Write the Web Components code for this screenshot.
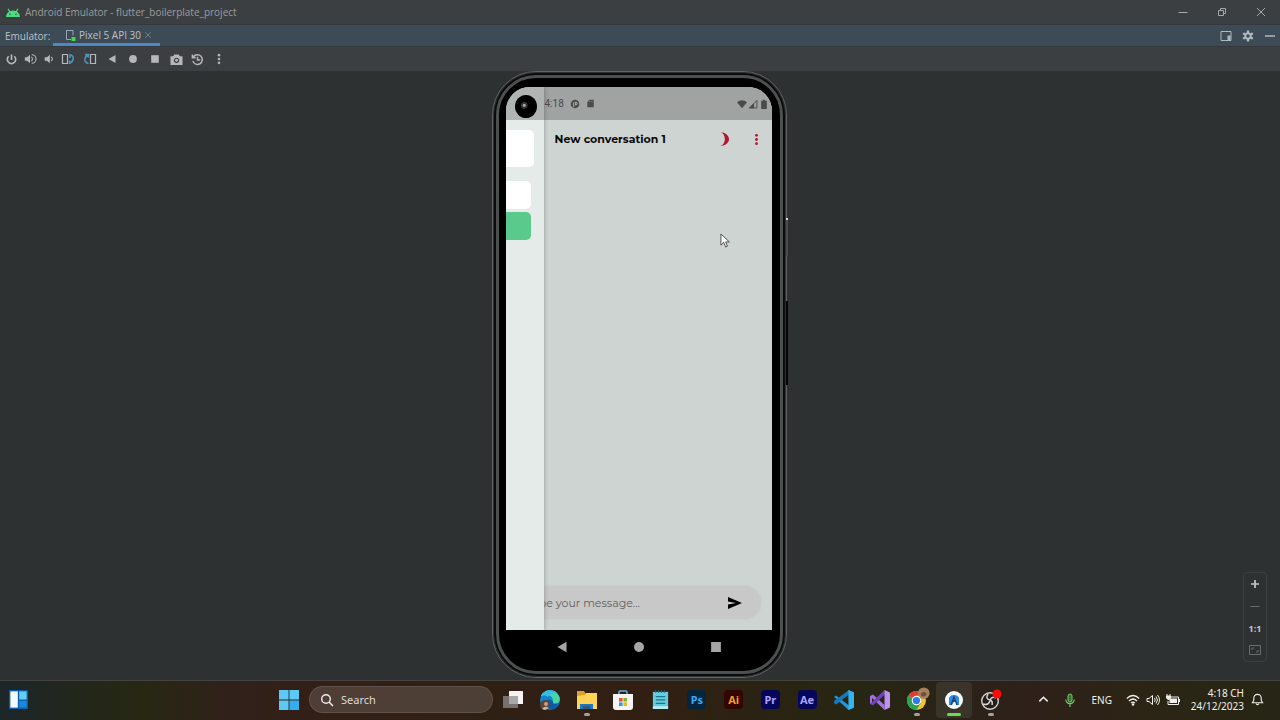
<!DOCTYPE html>
<html lang="en">
<head>
<meta charset="utf-8">
<title>Android Emulator - flutter_boilerplate_project</title>
<style>
  html, body { margin: 0; height: 100%; background: #2c3030; }
  body { font-family: "Open Sans", "Noto Sans", sans-serif; }
</style>
</head>
<body>
<emulator-desktop></emulator-desktop>

<script>
const ICONS = {
  android: '<path fill="#4ade80" d="M0 12a7 7 0 0 1 3-5.500L1.500 4l.8-.4L4.200 6a8 8 0 0 1 5.600 0l1.900-2.400.8.4L11 6.500A7 7 0 0 1 14 12z"/><circle cx="4" cy="9.200" r=".7" fill="#3c3f41"/><circle cx="10" cy="9.200" r=".7" fill="#3c3f41"/>|14',
  minimize: '<path d="M2.500 7.500h9" stroke="currentColor"/>|14',
  restore: '<path d="M3.500 5.500h5v5h-5zM5.500 5.500v-2h5v5h-2" fill="none" stroke="currentColor"/>|14',
  close: '<path d="M3 3l8 8M11 3l-8 8" stroke="currentColor" fill="none"/>|14',
  layout: '<path d="M2 2.500h10v9H2z" fill="none" stroke="currentColor"/><path d="M8.500 6.500h3v5h-3z" fill="currentColor"/>|14',
  gear: '<path fill="none" stroke="currentColor" stroke-width="2" d="M7 4.300a2.700 2.700 0 1 0 .01 0z"/><path stroke="currentColor" stroke-width="2.400" d="M7 1.500v2.500M7 10v2.500M2.200 4.300l2 1.200M9.800 8.500l2 1.200M2.200 9.700l2-1.200M9.800 5.500l2-1.200"/>|14',
  dash: '<path d="M2 7h10" stroke="currentColor" stroke-width="1.500"/>|14',
  phonetab: '<path d="M3 2.500h7v5M3.500 2v9.500H8" fill="none" stroke="#9aa7b0"/><path d="M8.500 9h4v4h-4z" fill="#3ddc4a"/>|14',
  power: '<path d="M4 3.500a4.500 4.500 0 1 0 6 0M7 1.500v6" fill="none" stroke="currentColor" stroke-width="1.800"/>|14',
  volup: '<path d="M1 5h2.500L7 2v10L3.500 9H1z" fill="currentColor"/><path d="M8.500 4.500a3 3 0 0 1 0 5M9 2a5 5 0 0 1 0 10" fill="none" stroke="currentColor" stroke-width="1.300"/>|14',
  voldown: '<path d="M2 5h2.500L8 2v10L4.500 9H2z" fill="currentColor"/><path d="M9.500 4.500a3 3 0 0 1 0 5" fill="none" stroke="currentColor" stroke-width="1.300"/>|14',
  rotl: '<path d="M1.500 2.500h5v9h-5z" fill="none" stroke="currentColor" stroke-width="1.200"/><path d="M8.500 2.500q4.500 1 3.500 5-.7 3-4 4M9 3V6M8.500 8.500V12" fill="none" stroke="#4595bf" stroke-width="1.600"/>|14',
  rotr: '<path d="M7.500 2.500h5v9h-5z" fill="none" stroke="currentColor" stroke-width="1.200"/><path d="M5.500 11.500q-4.500-1-3.500-5Q2.500 4 5 3M2 2.500h3.500V5.500" fill="none" stroke="#4595bf" stroke-width="1.600"/>|14',
  back: '<path d="M10.500 3v8L3.500 7z" fill="currentColor"/>|14',
  dot: '<circle cx="7" cy="7" r="3.900" fill="currentColor"/>|14',
  square: '<path d="M3.200 3.200h7.600v7.600H3.200z" fill="currentColor"/>|14',
  camera: '<path fill-rule="evenodd" d="M0.500 3.500h3l1-2h5l1 2h3v9.500h-13zM7 5a2.900 2.900 0 1 0 .01 0z" fill="currentColor"/><circle cx="7" cy="7.900" r="1.600" fill="currentColor"/>|14',
  history: '<path d="M2.500 4.500A5.200 5.200 0 1 1 2 8.500M1.500 1.500V5H5M7 4v3.500h3" fill="none" stroke="currentColor" stroke-width="1.600"/>|14',
  more: '<circle cx="7" cy="2.500" r="1.500" fill="currentColor"/><circle cx="7" cy="7" r="1.500" fill="currentColor"/><circle cx="7" cy="11.500" r="1.500" fill="currentColor"/>|14',
  plus: '<path d="M7 3v8M3 7h8" stroke="currentColor" stroke-width="1.700"/>|14',
  fit: '<path d="M1.500 2.500h11v9h-11zM4 7V5h2M10 7v2H8" fill="none" stroke="currentColor"/>|14',
  parking: '<circle cx="7" cy="7" r="6" fill="currentColor"/><path d="M5 11.500V4.500M7.500 9V4.500h1a1.800 1.800 0 0 1 0 3.500H7.500" fill="none" stroke="#a0a3a2" stroke-width="1.500"/>|14',
  sdcard: '<path d="M5.500 1H12v12H2V4.500z" fill="currentColor"/><path d="M5.500 3v2M7.500 3v2M9.500 3v2" stroke="#9a9d9c" stroke-width=".8"/>|14',
  pwifi: '<path d="M0 4.500q7-5.500 14 0L7 13z" fill="currentColor"/>|14',
  psignal: '<path d="M12.500 2v10.500H2z" fill="none" stroke="currentColor" stroke-width="1.300"/><path d="M8.500 6v7H1z" fill="currentColor"/>|14',
  pbattery: '<path d="M3 2.500h2.500V1h3v1.500H11V14H3z" fill="currentColor"/>|14',
  moon: '<path d="M3 0c5 1 8 4 8 7.200S7.500 13.800 2.500 14c3-1.300 4.300-3.700 4.300-6.800C6.800 4 5.500 1.300 3 0z" fill="#b3152c"/>|14',
  send: '<path d="M0 1l14 6-14 6V8.500L8 7 0 5.500z" fill="#000"/>|14',
  grid: '<path fill="#0b5ca8" d="M0 0h14v14H0z"/><path fill="#f4fbff" d="M1 1h5.500v12H1z"/><path fill="#62cdf6" d="M7.500 1H13v6H7.500z"/><path fill="#1989dc" d="M7.500 8H13v5H7.500z"/>|14',
  windows: '<path fill="#5cc9f6" d="M0 0h6.700v6.700H0zM7.300 0H14v6.700H7.300zM0 7.300h6.700V14H0z"/><path fill="#35acf0" d="M7.300 7.300H14V14H7.300z"/>|14',
  search: '<circle cx="6" cy="6" r="4.300" fill="none" stroke="#f0ece8" stroke-width="1.400"/><path d="M9 9l4 4" stroke="#f0ece8" stroke-width="1.600"/>|14',
  taskview: '<path fill="#f5f4f3" d="M6 1h14v13H6z"/><path fill="#7d7a78" d="M0 6h15v12H0z" opacity=".9"/><path fill="#aaa8a6" d="M6 6h9v8H6z"/>|20',
  edge: '<circle cx="10" cy="10" r="10" fill="#1683d0"/><path d="M1 6C3-1 16-2 19.500 7c1 4-1 7-5 7-3 0-3-2-2-3 2-4-5-8-11-5z" fill="#45d6a4"/><path d="M1 6c4-7 13-7 16-3-5-1-8 1-9 4-3-2-5-2-7-1z" fill="#35bde8"/><path d="M13 11q-1 4 6 2-3 6-9 7-5-5-2-11z" fill="#0d59a5"/><circle cx="5" cy="15" r="5" fill="#56463c"/><circle cx="6" cy="14" r="2" fill="#d19b7b"/><path d="M2 19q3-4 7-1l-4 2z" fill="#cbb8ab"/>|20',
  folder: '<path fill="#dba22a" d="M0 1h7l2 3h11v13H0z"/><path fill="#ffd355" d="M0 6l8-1 1-2h11v16H0z"/><path fill="#1d76ba" d="M3 14h13v5H3z"/><path fill="#34567b" d="M6 16h7v3H6z"/>|20',
  store: '<path d="M6 6V2q0-1 1-1h6q1 0 1 1v4" fill="none" stroke="#58b7e9" stroke-width="1.500"/><path fill="#f4f4f4" d="M0 4h20v13q0 3-3 3H3q-3 0-3-3z"/><path fill="#ef5027" d="M6 8h3.600v3.600H6z"/><path fill="#7db82c" d="M10.400 8H14v3.600h-3.600z"/><path fill="#2c9de4" d="M6 12.400h3.600V16H6z"/><path fill="#f5b51a" d="M10.400 12.400H14V16h-3.600z"/>|20',
  notepad: '<path fill="#65cddd" d="M2 2h16v18H2z"/><path fill="#b5eef2" d="M2 17h16v3H2z"/><path d="M5 7h10M5 10.500h10M5 14h10" stroke="#18788c" stroke-width="1.300"/><path d="M5 0v3M8 0v3M11 0v3M14 0v3" stroke="#176b7b"/>|20',
  vscode: '<path fill="#2497dc" d="M14.500 0L20 2.500v15L14.500 20 2 8.500 0 7l2-1.500 13 10z"/><path fill="#147abc" d="M0 13l2 1.500L15 4.500V0L0 11z"/><path fill="#35b5f0" d="M14.500 0L20 2.500v15L14.500 20z"/>|20',
  vs: '<path fill="#a46fdf" d="M0 6l3-1.500L14.500 15v5L2 8v5l-2 1z"/><path fill="#6f42b5" d="M0 14l3 1.500L14.500 5V0L2 12z"/><path fill="#bd91f0" d="M14.500 0L20 2.500v15L14.500 20z"/>|20',
  chrome: '<circle cx="9" cy="11" r="9" fill="#f7c52b"/><path d="M9 11L1.200 6.500A9 9 0 0 1 16.800 6.500H9z" fill="#df3e32"/><path d="M9 11L1.200 6.500A9 9 0 0 0 9 20l4-6.500z" fill="#2ba24c"/><circle cx="9" cy="11" r="4.500" fill="#fff"/><circle cx="9" cy="11" r="3.500" fill="#2b7de9"/><circle cx="16" cy="4" r="5.500" fill="#aa8058"/><path d="M13 5q3-5 6 0l-2 2h-3z" fill="#68513e"/>|20',
  studio: '<circle cx="10" cy="10" r="9" fill="#f7fbff"/><path d="M5 15V8q1-3 5-3t5 3v7h-3V9L8 15z" fill="#2e8be6"/><path d="M7 15l3-8 3 8M9 11h3" fill="none" stroke="#15406f" stroke-width="1.300"/>|20',
  obs: '<circle cx="9" cy="11" r="8.300" fill="#211e1c" stroke="#d6d3d0" stroke-width="1.400"/><path d="M7 4q-3 5 2 6 3 1 2 5M2 14q5 2 7-3M15 8q-4-2-6 2" fill="none" stroke="#d6d3d0" stroke-width="1.500"/><circle cx="16" cy="4" r="4.500" fill="#ff0808"/>|20',
  chevron: '<path d="M2.500 9L7 4.500 11.500 9" fill="none" stroke="currentColor" stroke-width="1.600"/>|14',
  mic: '<rect x="5" y="1" width="4" height="8" rx="2" fill="#376f32" stroke="#75c96c"/><path d="M2.800 6.500a4.200 4.200 0 0 0 8.400 0M7 10.500V14" fill="none" stroke="#75c96c" stroke-width="1.200"/>|14',
  wifi: '<path d="M.8 5.500q6.200-6 12.400 0M3 8q4-4 8 0M5 10.200q2-2 4 0" fill="none" stroke="currentColor" stroke-width="1.200"/><circle cx="7" cy="11.500" r="1.200" fill="currentColor"/>|14',
  sound: '<path d="M1 5.500h2L6.500 2.500v9L3 8.500H1zM8.500 5q1.500 2 0 4M10 3.500q3 3.500 0 7M11.500 2q4 5 0 10" fill="none" stroke="currentColor"/>|14',
  battery: '<path d="M3 4h9.500v7.500H2V8" fill="none" stroke="currentColor"/><path d="M3.500 5.500H11V10H3.500zM13 6h1v3h-1z" fill="currentColor"/><path d="M1 1v2M4 1v2M.5 3h4v2l-2 2-2-2z" fill="currentColor" stroke="currentColor"/>|14',
  bell: '<path d="M1.500 10.500L3 8V5.500a4 4 0 0 1 8 0V8l1.500 2.500zM5.500 11.500a1.600 1.600 0 0 0 3 0" fill="none" stroke="currentColor" stroke-width="1.200"/>|14',
  cursor: '<path d="M1 0v12l3-3 2 5 2-1-2-4.500h4z" fill="#fff" stroke="#222" stroke-width=".8"/>|14'
};

const define = (name, html) => customElements.define(name, class extends HTMLElement {
  constructor() {
    super();
    const t = document.createElement('template');
    t.innerHTML = '<style>*{box-sizing:border-box}:host{box-sizing:border-box}button{font:inherit;color:inherit;background:none;border:0;padding:0;margin:0;display:grid;place-items:center}</style>' + html;
    this.attachShadow({ mode: 'open' }).append(t.content.cloneNode(true));
  }
});

customElements.define('ui-icon', class extends HTMLElement {
  connectedCallback() {
    if (this.shadowRoot) return;
    const [art, box] = ICONS[this.getAttribute('name')].split('|');
    const size = this.getAttribute('size') || box;
    this.attachShadow({ mode: 'open' }).innerHTML =
      `<style>:host{display:block;flex:none;width:${size}px;height:${size}px}svg{display:block;overflow:visible}</style>
       <svg width="${size}" height="${size}" viewBox="0 0 ${box} ${box}" aria-hidden="true">${art}</svg>`;
  }
});

define('title-bar', `
<style>
  :host { display: flex; align-items: center; height: 24px; padding: 0 12px 0 6px; background: #3c3f41; color: #9a9c9d; font-size: 10px; }
  .name { flex: 1; margin-left: 5px; white-space: nowrap; }
  nav { display: flex; gap: 25px; color: #a5a7a8; }
</style>
<ui-icon name="android"></ui-icon><span class="name">Android Emulator - flutter_boilerplate_project</span>
<nav><button aria-label="Minimize"><ui-icon name="minimize"></ui-icon></button><button aria-label="Restore"><ui-icon name="restore"></ui-icon></button><button aria-label="Close"><ui-icon name="close"></ui-icon></button></nav>`);

define('tab-bar', `
<style>
  :host { display: flex; height: 23px; padding: 0 3px 0 5px; align-items: stretch; background: #3d4b57; border-top: 1px solid #35383a; border-bottom: 1px solid #35383a; color: #bcc1c4; font-size: 10px; }
  .label { width: 48px; align-self: center; white-space: nowrap; }
  .tab { display: flex; align-items: center; gap: 2px; width: 107px; padding: 2px 8px 0 10px; border-bottom: 3px solid #4a88c7; }
  .tab button { color: #84919a; }
  .tab span { flex: 1; white-space: nowrap; }
  nav { display: flex; gap: 8px; margin-left: auto; align-items: center; color: #afb9c0; }
</style>
<span class="label">Emulator:</span>
<div class="tab"><ui-icon name="phonetab"></ui-icon><span>Pixel 5 API 30</span><button aria-label="Close tab"><ui-icon name="close" size="10"></ui-icon></button></div>
<nav><button aria-label="Layout"><ui-icon name="layout"></ui-icon></button><button aria-label="Settings"><ui-icon name="gear"></ui-icon></button><button aria-label="Hide"><ui-icon name="dash"></ui-icon></button></nav>`);

define('tool-bar', `
<style>
  :host { display: flex; align-items: center; height: 24px; padding: 0 4px; gap: 8px; background: #3c3f41; color: #b4b6b8; }
  div { display: flex; gap: 5px; }
  .nav { justify-content: space-between; gap: 0; width: 143px; }
  button { width: 14px; }
</style>
<div>
<button aria-label="Power"><ui-icon name="power" size="13"></ui-icon></button>
<button aria-label="Volume up"><ui-icon name="volup" size="12"></ui-icon></button>
<button aria-label="Volume down"><ui-icon name="voldown" size="12"></ui-icon></button>
<button aria-label="Rotate left"><ui-icon name="rotl"></ui-icon></button>
</div>
<div class="nav">
<button aria-label="Rotate right"><ui-icon name="rotr"></ui-icon></button>
<button aria-label="Back"><ui-icon name="back"></ui-icon></button>
<button aria-label="Home"><ui-icon name="dot"></ui-icon></button>
<button aria-label="Overview"><ui-icon name="square"></ui-icon></button>
<button aria-label="Screenshot"><ui-icon name="camera" size="13"></ui-icon></button>
<button aria-label="Snapshots"><ui-icon name="history" size="13"></ui-icon></button>
<button aria-label="More"><ui-icon name="more" size="12"></ui-icon></button>
</div>`);

define('status-bar', `
<style>
  :host { display: flex; align-items: center; height: 33px; padding: 0 3px 0 39px; gap: 4px; background: #a0a3a2; color: #484b4a; font: 10px Roboto, sans-serif; }
  .time { margin-right: 2px; }
  ui-icon + ui-icon { margin-left: 2px; }
  .right { display: flex; margin-left: auto; align-items: center; }
  .right ui-icon { margin: 0; }
  .right ui-icon + ui-icon { margin-left: 1px; }
</style>
<span class="time">4:18</span><ui-icon name="parking" size="10"></ui-icon><ui-icon name="sdcard" size="9"></ui-icon>
<div class="right"><ui-icon name="pwifi" size="10"></ui-icon><ui-icon name="psignal" size="10"></ui-icon><ui-icon name="pbattery" size="10"></ui-icon></div>`);

define('side-drawer', `
<style>
  :host { display: flex; flex-direction: column; align-items: flex-start; padding: 43px 10px 0 0; background: linear-gradient(#b0b5b3 0 33px, #e4ebe8 33px); box-shadow: 1px 0 4px #0003; }
  div { background: #fff; border-radius: 0 5px 5px 0; height: 28px; width: 25px; }
  .head { width: 28px; height: 37px; margin-bottom: 14px; }
  .new { background: #5ac98c; margin-top: 3px; }
</style>
<div class="head"></div><div></div><div class="new"></div>`);

define('chat-screen', `
<style>
  :host { position: relative; display: flex; flex-direction: column; overflow: hidden; background: #ced4d2; border-radius: 24px 24px 0 0; font-family: Montserrat, Inter, sans-serif; color: #0a0a0a; }
  header { display: flex; align-items: center; height: 38px; padding: 0 9px 0 49px; }
  h1 { flex: 1; margin: 0; font-size: 11px; font-weight: 700; white-space: nowrap; }
  .more { color: #b3152c; margin-left: 18px; }
  main { flex: 1; }
  form { display: flex; align-items: center; height: 33px; margin: 0 11px 11px 10px; padding: 0 19px 0 11px; border-radius: 17px; background: #c9c8c8; box-shadow: 0 0 3px #c9c8c8; }
  input { flex: 1; min-width: 0; border: 0; outline: 0; padding: 0; background: none; font: 11px Montserrat, Inter, sans-serif; color: #222; }
  input::placeholder { color: #5f6060; opacity: 1; }
  side-drawer { position: absolute; inset: 0 auto 0 0; width: 38px; }
  .lens { position: absolute; left: 9px; top: 8px; width: 22px; height: 23px; border-radius: 50%; background: radial-gradient(circle at 42% 45%, #aaa 0 1px, #333 2px 3px, #000 4px); }
  .pointer { position: absolute; left: 214px; top: 147px; }
</style>
<status-bar></status-bar>
<header><h1>New conversation 1</h1><button aria-label="Dark mode"><ui-icon name="moon"></ui-icon></button><button class="more" aria-label="Menu"><ui-icon name="more" size="13"></ui-icon></button></header>
<main></main>
<form><input type="text" aria-label="Message" placeholder="Type your message..."><button type="button" aria-label="Send"><ui-icon name="send"></ui-icon></button></form>
<side-drawer></side-drawer><div class="lens"></div><ui-icon class="pointer" name="cursor" size="13"></ui-icon>`);

define('phone-device', `
<style>
  :host { position: relative; display: flex; width: 295px; padding: 3px; border: 1px solid #636565; border-radius: 44px; background: #090a0a; box-shadow: inset 0 0 1px 1px #343636; }
  .ring { flex: 1; display: flex; flex-direction: column; border: 3px solid #4d5050; border-radius: 40px; background: #000; padding: 9px 8px 0 7px; overflow: hidden; }
  chat-screen { flex: 1; }
  nav { display: grid; grid-template-columns: repeat(3, 77px); justify-content: center; height: 33px; margin-bottom: 8px; color: #a5a5a5; }
  .key { position: absolute; left: 100%; width: 2px; }
  .power { top: 146px; height: 38px; background: #4b4d4d; border-top: 2px solid #ddd; }
  .volume { top: 229px; height: 84px; background: #050505; }
</style>
<div class="ring"><chat-screen></chat-screen>
<nav><button aria-label="Back"><ui-icon name="back" size="18"></ui-icon></button><button aria-label="Home"><ui-icon name="dot" size="18"></ui-icon></button><button aria-label="Overview"><ui-icon name="square" size="18"></ui-icon></button></nav></div>
<div class="key power"></div><div class="key volume"></div>`);

define('zoom-panel', `
<style>
  :host { display: flex; flex-direction: column; align-items: center; width: 24px; padding: 3px 0; gap: 6px; border: 1px solid #3b3f40; border-radius: 4px; color: #c4c6c7; font: 700 9px "Open Sans", sans-serif; }
  button { width: 22px; height: 16px; white-space: nowrap; }
  .dim { color: #686c6d; }
</style>
<button aria-label="Zoom in"><ui-icon name="plus"></ui-icon></button><button class="dim" aria-label="Zoom out"><ui-icon name="minimize"></ui-icon></button><button>1:1</button><button class="dim" aria-label="Fit"><ui-icon name="fit"></ui-icon></button>`);

define('task-app', `
<style>
  :host { position: relative; display: grid; place-items: center; height: 36px; border-radius: 4px; }
  :host([active]) { background: #ffffff14; }
  :host([running])::after, :host([active])::after { content: ""; position: absolute; bottom: 2px; left: 50%; width: 6px; margin-left: -3px; height: 3px; border-radius: 2px; background: #a5a09c; }
  :host([active])::after { width: 14px; margin-left: -7px; background: #67df4d; }
</style>
<button><slot></slot></button>`);

define('task-bar', `
<style>
  :host { display: grid; grid-template-columns: 1fr auto 1fr; align-items: center; height: 40px; padding-bottom: 2px; border-top: 1px solid #45433f; color: #f1efec; background: linear-gradient(90deg, #1c2629 0, #232719 7%, #272713 11%, #30211a 18%, #331f17 25%, #2f2014 38%, #321f14 50%, #2b2212 58%, #272612 66%, #292317 74%, #2e201a 80%, #2b2514 90%, #272515); }
  .widgets { justify-self: start; margin-left: 9px; }
  .center { display: flex; align-items: center; gap: 2px; }
  .start { width: 36px; }
  .search { display: flex; align-items: center; gap: 7px; width: 184px; height: 27px; padding: 0 10px; border: 1px solid #ffffff1a; border-radius: 14px; background: #ffffff24; }
  input { width: 120px; border: 0; padding: 0; outline: 0; background: none; color: #fff; font: 11px "Noto Sans", sans-serif; }
  input::placeholder { color: #dedad7; opacity: 1; }
  .apps { display: grid; grid-template-columns: repeat(14, 1fr); width: 514px; }
  .adobe { width: 19px; height: 19px; border-radius: 4px; font: 700 11px/19px "Noto Sans", sans-serif; text-align: center; }
  .ps { background: #06263f; color: #3ea8f5; } .ai { background: #330604; color: #f79a28; }
  .pr { background: #06065b; color: #b4a1fb; } .ae { background: #06065b; color: #aaa3fa; }
  .tray { display: flex; justify-self: end; align-items: center; margin-right: 16px; font: 10px "Noto Sans", sans-serif; }
  .mic { margin: 0 15px 0 13px; } .lang { margin-right: 14px; }
  .net { display: flex; gap: 6px; }
  .clock { display: grid; width: 56px; margin: 0 6px 0 9px; padding-right: 1px; justify-items: end; line-height: 13px; white-space: nowrap; }
</style>
<button class="widgets" aria-label="Widgets"><ui-icon name="grid" size="19"></ui-icon></button>
<div class="center">
  <button class="start" aria-label="Start"><ui-icon name="windows" size="20"></ui-icon></button>
  <label class="search"><ui-icon name="search"></ui-icon><input type="text" aria-label="Search" placeholder="Search"></label>
  <div class="apps">
    <task-app><ui-icon name="taskview"></ui-icon></task-app>
    <task-app><ui-icon name="edge"></ui-icon></task-app>
    <task-app running><ui-icon name="folder"></ui-icon></task-app>
    <task-app><ui-icon name="store"></ui-icon></task-app>
    <task-app><ui-icon name="notepad" size="19"></ui-icon></task-app>
    <task-app><div class="adobe ps">Ps</div></task-app>
    <task-app><div class="adobe ai">Ai</div></task-app>
    <task-app><div class="adobe pr">Pr</div></task-app>
    <task-app><div class="adobe ae">Ae</div></task-app>
    <task-app><ui-icon name="vscode"></ui-icon></task-app>
    <task-app><ui-icon name="vs"></ui-icon></task-app>
    <task-app running><ui-icon name="chrome" size="21"></ui-icon></task-app>
    <task-app active><ui-icon name="studio"></ui-icon></task-app>
    <task-app running><ui-icon name="obs"></ui-icon></task-app>
  </div>
</div>
<div class="tray">
  <button aria-label="Hidden icons"><ui-icon name="chevron" size="13"></ui-icon></button>
  <button class="mic" aria-label="Microphone"><ui-icon name="mic"></ui-icon></button>
  <button class="lang">ENG</button>
  <button aria-label="Network, sound and power"><span class="net"><ui-icon name="wifi"></ui-icon><ui-icon name="sound"></ui-icon><ui-icon name="battery"></ui-icon></span></button>
  <div class="clock"><span>4:18 CH</span><span>24/12/2023</span></div>
  <button aria-label="Notifications"><ui-icon name="bell" size="13"></ui-icon></button>
</div>`);

define('emulator-desktop', `
<style>
  :host { display: flex; flex-direction: column; min-height: 100vh; }
  .stage { position: relative; flex: 1; display: flex; justify-content: center; padding: 0 2px 2px 0; background: #2d3131; }
  zoom-panel { position: absolute; right: 13px; bottom: 18px; }
</style>
<title-bar></title-bar><tab-bar></tab-bar><tool-bar></tool-bar>
<div class="stage"><phone-device></phone-device><zoom-panel></zoom-panel></div>
<task-bar></task-bar>`);
</script>
</body>
</html>
